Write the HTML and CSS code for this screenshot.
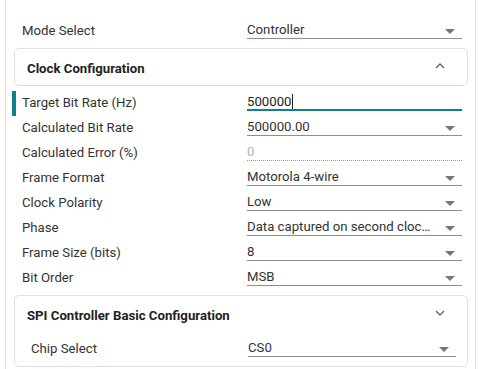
FILE: index.html
```html
<!DOCTYPE html>
<html lang="en">
  <head>
    <meta charset="UTF-8" />
    <meta name="viewport" content="width=device-width, initial-scale=1.0" />
    <title>SPI Configuration</title>
    <link rel="stylesheet" href="styles.css">
  </head>
  <body>
    <main class="panel">
      <div class="row is-first">
        <label>Mode Select</label>
        <div class="select">
          <span>Controller</span>
          <svg class="caret" viewBox="0 0 10 5"><polygon points="0,0 10,0 5,5" /></svg>
        </div>
      </div>

      <section class="card">
        <header>
          <h3>Clock Configuration</h3>
          <svg class="chevron" viewBox="0 0 10 10"><polyline points="1,7 5,3 9,7" /></svg>
        </header>
      </section>

      <div class="row is-focused">
        <label>Target Bit Rate (Hz)</label>
        <div class="input"><span class="cursor">500000</span></div>
      </div>
      <div class="row">
        <label>Calculated Bit Rate</label>
        <div class="select">
          <span>500000.00</span>
          <svg class="caret" viewBox="0 0 10 5"><polygon points="0,0 10,0 5,5" /></svg>
        </div>
      </div>
      <div class="row">
        <label>Calculated Error (%)</label>
        <div class="select is-disabled"><span>0</span></div>
      </div>
      <div class="row">
        <label>Frame Format</label>
        <div class="select">
          <span>Motorola 4-wire</span>
          <svg class="caret" viewBox="0 0 10 5"><polygon points="0,0 10,0 5,5" /></svg>
        </div>
      </div>
      <div class="row">
        <label>Clock Polarity</label>
        <div class="select">
          <span>Low</span>
          <svg class="caret" viewBox="0 0 10 5"><polygon points="0,0 10,0 5,5" /></svg>
        </div>
      </div>
      <div class="row">
        <label>Phase</label>
        <div class="select">
          <span>Data captured on second clock edge</span>
          <svg class="caret" viewBox="0 0 10 5"><polygon points="0,0 10,0 5,5" /></svg>
        </div>
      </div>
      <div class="row">
        <label>Frame Size (bits)</label>
        <div class="select">
          <span>8</span>
          <svg class="caret" viewBox="0 0 10 5"><polygon points="0,0 10,0 5,5" /></svg>
        </div>
      </div>
      <div class="row">
        <label>Bit Order</label>
        <div class="select">
          <span>MSB</span>
          <svg class="caret" viewBox="0 0 10 5"><polygon points="0,0 10,0 5,5" /></svg>
        </div>
      </div>

      <section class="card is-open">
        <header>
          <h3>SPI Controller Basic Configuration</h3>
          <svg class="chevron" viewBox="0 0 10 10"><polyline points="1,3 5,7 9,3" /></svg>
        </header>
        <div class="card-body">
          <div class="row">
            <label>Chip Select</label>
            <div class="select">
              <span>CS0</span>
              <svg class="caret" viewBox="0 0 10 5"><polygon points="0,0 10,0 5,5" /></svg>
            </div>
          </div>
        </div>
      </section>
    </main>
  </body>
</html>
```

FILE: styles.css
```css
*,
*::before,
*::after {
  box-sizing: border-box;
  margin: 0;
  padding: 0;
}
html {
  font-family: Roboto, "Liberation Sans", sans-serif;
  font-size: 13.2px;
  color: #333;
}
body {
  background-color: #fff;
  overflow: hidden;
}

.panel {
  height: 369px;
  margin: 0 4px 0 5px;
  border-left: 1px solid #e2e2e2;
  border-right: 1px solid #e2e2e2;
  padding-top: 19px;
  overflow: hidden;
}

.row {
  display: grid;
  grid-template-columns: 1fr 215px;
  height: 25px;
  padding-left: 16px;
  padding-right: 13px;

  & label {
    line-height: 23px;
  }

  &.is-first {
    margin-bottom: 4px;
  }

  &.is-focused {
    margin-left: 6px;
    padding-left: 6px;
    border-left: 4px solid #12808b;
  }
}

.select {
  display: flex;
  align-items: flex-start;
  gap: 10px;
  height: 20px;
  padding-top: 2px;
  padding-right: 7px;
  line-height: 17px;
  border-bottom: 1px solid #8e8e8e;

  & span {
    flex: 1;
    min-width: 0;
    white-space: nowrap;
    overflow: hidden;
    text-overflow: ellipsis;
  }

  & .caret {
    width: 10px;
    height: 5px;
    margin-top: 8px;
    fill: #777;
  }

  &.is-disabled {
    color: #b3b3b3;
    border-bottom: 1px dotted #999;
  }
}

.input {
  height: 20px;
  padding-top: 3px;
  line-height: 16px;
  color: #222;
  border-bottom: 2px solid #12808b;

  & .cursor {
    padding-right: 1px;
    border-right: 1px solid #222;
  }
}

.card {
  margin: 0 7px 5px 8px;
  border: 1px solid #e0e0e0;
  border-radius: 5px;

  & header {
    display: flex;
    justify-content: space-between;
    align-items: flex-start;
    height: 36px;
    padding: 12px 22px 0 12px;
  }

  & h3 {
    font-size: 13.2px;
    font-weight: 700;
    line-height: 16px;
    color: #222;
  }

  & .chevron {
    width: 10px;
    height: 10px;
    fill: none;
    stroke: #666;
    stroke-width: 1.4;
  }

  &.is-open {
    margin-top: 4px;
  }
}

.card-body {
  padding-top: 5px;
  padding-bottom: 4px;

  & .row {
    grid-template-columns: 1fr 208px;
    padding-left: 16px;
    padding-right: 11px;
  }
}
```
